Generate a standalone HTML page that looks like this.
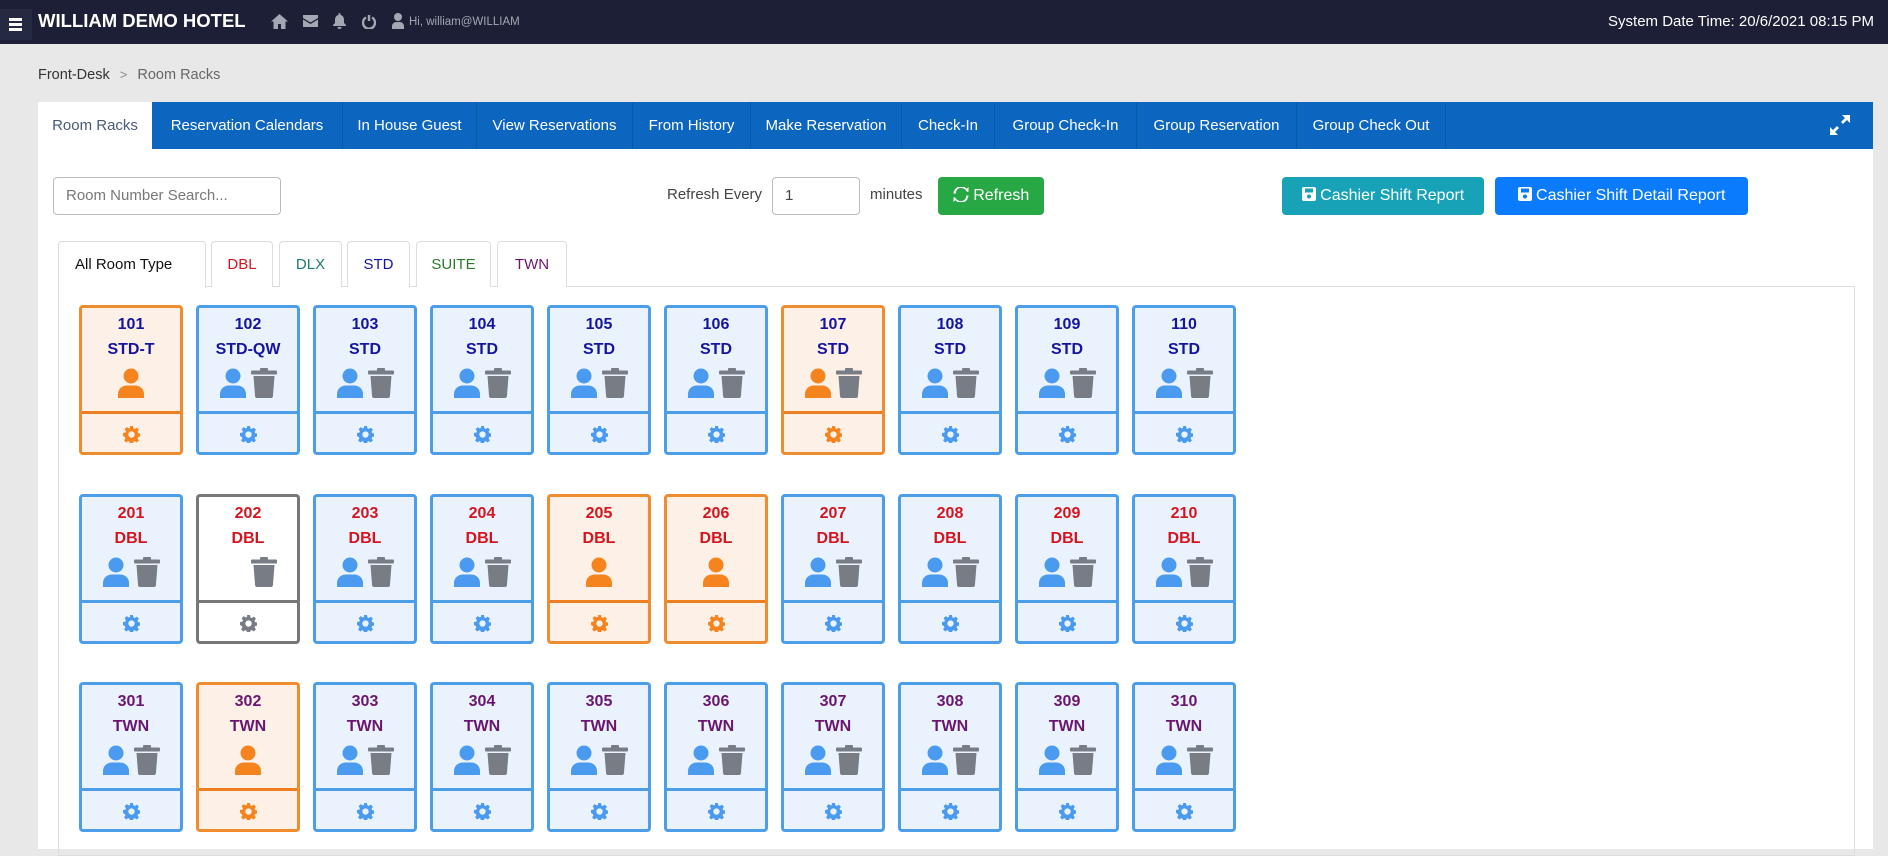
<!DOCTYPE html>
<html><head><meta charset="utf-8">
<style>
*{box-sizing:border-box;margin:0;padding:0}
body{width:1888px;height:848px;overflow:hidden;background:#e8e8e8;font-family:"Liberation Sans",sans-serif;position:relative}
.abs{position:absolute}
.hdr{left:0;top:0;width:1888px;height:44px;background:#1c1f35}
.ham{left:0;top:9px;width:32px;height:31px;background:#252a42}
.title{left:38px;top:10px;color:#fff;font-weight:bold;font-size:18.5px}
.sys{right:14px;top:13px;color:#fff;font-size:15px}
.bc{left:38px;top:67px;font-size:14.5px;color:#333}
.tabbar{left:38px;top:102px;width:1835px;height:47px;background:#0c65bf}
.tab{position:absolute;top:0;height:47px;line-height:47px;color:#fff;font-size:15px;text-align:center;border-right:1px solid #0a58a8}
.panel{left:38px;top:149px;width:1835px;height:700px;background:#fff}
.inp{border:1px solid #bbb;border-radius:4px;background:#fff;font-size:15px;color:#777;padding-left:12px;line-height:36px}
.btn{border-radius:4px;color:#fff;font-size:16px;text-align:center;line-height:37px}
.rt{position:absolute;top:241px;height:46px;line-height:46px;font-size:15px;text-align:center;background:#fff;border:1px solid #ddd;border-bottom:none;border-radius:4px 4px 0 0}
.box{left:58px;top:286px;width:1797px;height:570px;border:1px solid #ddd}
.card{position:absolute;width:104px;height:150px;border:3px solid #4d9ee8;border-radius:4px;background:#eaf3fd;text-align:center;font-weight:bold;font-size:16px}
.card .n{position:absolute;left:0;right:0;top:8px}
.card .t{position:absolute;left:0;right:0;top:33px}
.card .ic{position:absolute;left:0;right:0;top:60px;height:30px}
.card .ft{position:absolute;left:0;right:0;top:103px;bottom:0;border-top:3px solid #4d9ee8}
.card .ft svg{position:absolute;left:41px;top:12px}
.o{border-color:#f08c30;background:#fdf0e6}.o .ft{border-color:#ec7f22}
.g{border-color:#777;background:#fff}.g .ft{border-color:#777}
.r1{color:#1414a0}.r2{color:#d4151f}.r3{color:#6a1670}
</style></head><body>
<svg width="0" height="0" style="position:absolute">
<defs>
<symbol id="p" viewBox="0 0 28 30"><circle cx="14" cy="8" r="7.5"/><path d="M1 30v-4c0-5 4-8.5 9-8.5h8c5 0 9 3.5 9 8.5v4z"/></symbol>
<symbol id="tr" viewBox="0 0 26 30"><rect x="9" y="0" width="8" height="3" rx="1"/><rect x="0" y="2.5" width="26" height="4" rx="1"/><path d="M2.5 8h21l-1.6 20.5c-.1 1-1 1.5-2 1.5H6.1c-1 0-1.9-.5-2-1.5z"/></symbol>
<symbol id="gr" viewBox="0 0 16 16"><path d="M6.6 0h2.8l.4 2.2 1.3.6 1.9-1.3 2 2-1.3 1.9.6 1.3 2.2.4v2.8l-2.2.4-.6 1.3 1.3 1.9-2 2-1.9-1.3-1.3.6-.4 2.2H6.6l-.4-2.2-1.3-.6-1.9 1.3-2-2 1.3-1.9-.6-1.3L0 9.4V6.6l2.2-.4.6-1.3L1.5 3l2-2 1.9 1.3 1.3-.6zM8 5a3 3 0 100 6 3 3 0 000-6z" fill-rule="evenodd"/></symbol>
</defs></svg>

<div class="abs hdr"></div>
<div class="abs ham"><div class="abs" style="left:9px;top:9px;width:13px;height:2.5px;background:#fff"></div><div class="abs" style="left:9px;top:14px;width:13px;height:2.5px;background:#fff"></div><div class="abs" style="left:9px;top:19px;width:13px;height:2.5px;background:#fff"></div></div>
<div class="abs title">WILLIAM DEMO HOTEL</div>
<svg class="abs" style="left:271px;top:14px" width="17" height="15" viewBox="0 0 17 15" fill="#a3a7b3"><path d="M8.5 0L0 7.5h2.5V15h4.5v-5h3v5h4.5V7.5H17z"/></svg>
<svg class="abs" style="left:303px;top:15px" width="15" height="12" viewBox="0 0 15 12" fill="#a3a7b3"><path d="M0 0h15v3L7.5 7.5 0 3z"/><path d="M0 4.5l7.5 4.5 7.5-4.5V12H0z"/></svg>
<svg class="abs" style="left:333px;top:13px" width="13" height="16" viewBox="0 0 13 16" fill="#a3a7b3"><path d="M6.5 0c.7 0 1 .5 1 1v1c2.5.5 3.5 2.5 3.5 5v3l2 2v1H0v-1l2-2V7c0-2.5 1-4.5 3.5-5V1c0-.5.3-1 1-1zM4.5 14h4a2 2 0 01-4 0z"/></svg>
<svg class="abs" style="left:362px;top:14px" width="14" height="15" viewBox="0 0 14 15" fill="none" stroke="#a3a7b3" stroke-width="2.4"><path d="M4 3.5a6 6 0 106 0"/><path d="M7 1v6"/></svg>
<svg class="abs" style="left:392px;top:13px" width="12" height="16" viewBox="0 0 12 16" fill="#a3a7b3"><circle cx="6" cy="4" r="4"/><path d="M0 16v-3c0-2 2-4 4-4h4c2 0 4 2 4 4v3z"/></svg>
<div class="abs" style="left:409px;top:16px;color:#a3a7b3;font-size:11.5px">Hi, william@WILLIAM</div>
<div class="abs sys">System Date Time: 20/6/2021 08:15 PM</div>

<div class="abs bc">Front-Desk <span style="color:#888;font-size:13px;margin:0 6px">&gt;</span> <span style="color:#666">Room Racks</span></div>

<div class="abs tabbar">
<div class="tab" style="left:0;width:114px;background:#fff;color:#4a5a78;border:none">Room Racks</div>
<div class="tab" style="left:114px;width:191px">Reservation Calendars</div>
<div class="tab" style="left:305px;width:134px">In House Guest</div>
<div class="tab" style="left:439px;width:156px">View Reservations</div>
<div class="tab" style="left:595px;width:118px">From History</div>
<div class="tab" style="left:713px;width:151px">Make Reservation</div>
<div class="tab" style="left:864px;width:93px">Check-In</div>
<div class="tab" style="left:957px;width:142px">Group Check-In</div>
<div class="tab" style="left:1099px;width:160px">Group Reservation</div>
<div class="tab" style="left:1259px;width:149px">Group Check Out</div>
<svg class="abs" style="left:1791px;top:12px" width="22" height="22" viewBox="0 0 22 22" fill="#fff"><path d="M13 1h8v8l-3-3-4 4-2-2 4-4z"/><path d="M9 21H1v-8l3 3 4-4 2 2-4 4z"/></svg>
</div>

<div class="abs panel"></div>
<div class="abs inp" style="left:53px;top:177px;width:228px;height:38px">Room Number Search...</div>
<div class="abs" style="left:667px;top:186px;font-size:15px;color:#444">Refresh Every</div>
<div class="abs inp" style="left:772px;top:177px;width:88px;height:38px;color:#444">1</div>
<div class="abs" style="left:870px;top:186px;font-size:15px;color:#444">minutes</div>
<div class="abs btn" style="left:938px;top:177px;width:106px;height:38px;background:#28a745"><svg width="16" height="15" viewBox="0 0 16 16" fill="#fff" style="vertical-align:-2px"><path d="M8 1a7 7 0 016.3 4H16V0l-2 2A8 8 0 000 7h2.5A5.5 5.5 0 018 1zM8 15a7 7 0 01-6.3-4H0v5l2-2a8 8 0 0014-5h-2.5A5.5 5.5 0 018 15z"/></svg> Refresh</div>
<div class="abs btn" style="left:1282px;top:177px;width:202px;height:38px;background:#17a2b8"><svg width="14" height="14" viewBox="0 0 14 14" style="vertical-align:-1px"><rect width="14" height="14" rx="2" fill="#fff"/><rect x="3" y="1.5" width="8" height="4" fill="#17a2b8"/><circle cx="7" cy="9.5" r="2" fill="#17a2b8"/></svg> Cashier Shift Report</div>
<div class="abs btn" style="left:1495px;top:177px;width:253px;height:38px;background:#0b7bfd"><svg width="14" height="14" viewBox="0 0 14 14" style="vertical-align:-1px"><rect width="14" height="14" rx="2" fill="#fff"/><rect x="3" y="1.5" width="8" height="4" fill="#0b7bfd"/><circle cx="7" cy="9.5" r="2" fill="#0b7bfd"/></svg> Cashier Shift Detail Report</div>

<div class="abs box"></div>
<div class="rt" style="left:58px;width:148px;color:#111;height:47px;text-align:left;padding-left:16px">All Room Type</div>
<div class="rt" style="left:211px;width:62px;color:#d4151f">DBL</div>
<div class="rt" style="left:279px;width:63px;color:#1d7a6e">DLX</div>
<div class="rt" style="left:347px;width:63px;color:#1414a0">STD</div>
<div class="rt" style="left:416px;width:75px;color:#2a7a2a">SUITE</div>
<div class="rt" style="left:497px;width:70px;color:#6a1670">TWN</div>

<!-- Row 1 -->
<div class="card o r1" style="left:79px;top:305px"><div class="n">101</div><div class="t">STD-T</div><div class="ic"><svg width="28" height="30" fill="#f5841f"><use href="#p"/></svg></div><div class="ft"><svg width="17" height="17" fill="#f5841f"><use href="#gr"/></svg></div></div>
<div class="card r1" style="left:196px;top:305px"><div class="n">102</div><div class="t">STD-QW</div><div class="ic"><svg width="28" height="30" fill="#4a9af0"><use href="#p"/></svg> <svg width="26" height="30" fill="#777c85"><use href="#tr"/></svg></div><div class="ft"><svg width="17" height="17" fill="#4a9af0"><use href="#gr"/></svg></div></div>
<div class="card r1" style="left:313px;top:305px"><div class="n">103</div><div class="t">STD</div><div class="ic"><svg width="28" height="30" fill="#4a9af0"><use href="#p"/></svg> <svg width="26" height="30" fill="#777c85"><use href="#tr"/></svg></div><div class="ft"><svg width="17" height="17" fill="#4a9af0"><use href="#gr"/></svg></div></div>
<div class="card r1" style="left:430px;top:305px"><div class="n">104</div><div class="t">STD</div><div class="ic"><svg width="28" height="30" fill="#4a9af0"><use href="#p"/></svg> <svg width="26" height="30" fill="#777c85"><use href="#tr"/></svg></div><div class="ft"><svg width="17" height="17" fill="#4a9af0"><use href="#gr"/></svg></div></div>
<div class="card r1" style="left:547px;top:305px"><div class="n">105</div><div class="t">STD</div><div class="ic"><svg width="28" height="30" fill="#4a9af0"><use href="#p"/></svg> <svg width="26" height="30" fill="#777c85"><use href="#tr"/></svg></div><div class="ft"><svg width="17" height="17" fill="#4a9af0"><use href="#gr"/></svg></div></div>
<div class="card r1" style="left:664px;top:305px"><div class="n">106</div><div class="t">STD</div><div class="ic"><svg width="28" height="30" fill="#4a9af0"><use href="#p"/></svg> <svg width="26" height="30" fill="#777c85"><use href="#tr"/></svg></div><div class="ft"><svg width="17" height="17" fill="#4a9af0"><use href="#gr"/></svg></div></div>
<div class="card o r1" style="left:781px;top:305px"><div class="n">107</div><div class="t">STD</div><div class="ic"><svg width="28" height="30" fill="#f5841f"><use href="#p"/></svg> <svg width="26" height="30" fill="#777c85"><use href="#tr"/></svg></div><div class="ft"><svg width="17" height="17" fill="#f5841f"><use href="#gr"/></svg></div></div>
<div class="card r1" style="left:898px;top:305px"><div class="n">108</div><div class="t">STD</div><div class="ic"><svg width="28" height="30" fill="#4a9af0"><use href="#p"/></svg> <svg width="26" height="30" fill="#777c85"><use href="#tr"/></svg></div><div class="ft"><svg width="17" height="17" fill="#4a9af0"><use href="#gr"/></svg></div></div>
<div class="card r1" style="left:1015px;top:305px"><div class="n">109</div><div class="t">STD</div><div class="ic"><svg width="28" height="30" fill="#4a9af0"><use href="#p"/></svg> <svg width="26" height="30" fill="#777c85"><use href="#tr"/></svg></div><div class="ft"><svg width="17" height="17" fill="#4a9af0"><use href="#gr"/></svg></div></div>
<div class="card r1" style="left:1132px;top:305px"><div class="n">110</div><div class="t">STD</div><div class="ic"><svg width="28" height="30" fill="#4a9af0"><use href="#p"/></svg> <svg width="26" height="30" fill="#777c85"><use href="#tr"/></svg></div><div class="ft"><svg width="17" height="17" fill="#4a9af0"><use href="#gr"/></svg></div></div>

<!-- Row 2 -->
<div class="card r2" style="left:79px;top:494px"><div class="n">201</div><div class="t">DBL</div><div class="ic"><svg width="28" height="30" fill="#4a9af0"><use href="#p"/></svg> <svg width="26" height="30" fill="#777c85"><use href="#tr"/></svg></div><div class="ft"><svg width="17" height="17" fill="#4a9af0"><use href="#gr"/></svg></div></div>
<div class="card g r2" style="left:196px;top:494px"><div class="n">202</div><div class="t">DBL</div><div class="ic"><svg width="28" height="30" fill="none"></svg> <svg width="26" height="30" fill="#777c85"><use href="#tr"/></svg></div><div class="ft"><svg width="17" height="17" fill="#777c85"><use href="#gr"/></svg></div></div>
<div class="card r2" style="left:313px;top:494px"><div class="n">203</div><div class="t">DBL</div><div class="ic"><svg width="28" height="30" fill="#4a9af0"><use href="#p"/></svg> <svg width="26" height="30" fill="#777c85"><use href="#tr"/></svg></div><div class="ft"><svg width="17" height="17" fill="#4a9af0"><use href="#gr"/></svg></div></div>
<div class="card r2" style="left:430px;top:494px"><div class="n">204</div><div class="t">DBL</div><div class="ic"><svg width="28" height="30" fill="#4a9af0"><use href="#p"/></svg> <svg width="26" height="30" fill="#777c85"><use href="#tr"/></svg></div><div class="ft"><svg width="17" height="17" fill="#4a9af0"><use href="#gr"/></svg></div></div>
<div class="card o r2" style="left:547px;top:494px"><div class="n">205</div><div class="t">DBL</div><div class="ic"><svg width="28" height="30" fill="#f5841f"><use href="#p"/></svg></div><div class="ft"><svg width="17" height="17" fill="#f5841f"><use href="#gr"/></svg></div></div>
<div class="card o r2" style="left:664px;top:494px"><div class="n">206</div><div class="t">DBL</div><div class="ic"><svg width="28" height="30" fill="#f5841f"><use href="#p"/></svg></div><div class="ft"><svg width="17" height="17" fill="#f5841f"><use href="#gr"/></svg></div></div>
<div class="card r2" style="left:781px;top:494px"><div class="n">207</div><div class="t">DBL</div><div class="ic"><svg width="28" height="30" fill="#4a9af0"><use href="#p"/></svg> <svg width="26" height="30" fill="#777c85"><use href="#tr"/></svg></div><div class="ft"><svg width="17" height="17" fill="#4a9af0"><use href="#gr"/></svg></div></div>
<div class="card r2" style="left:898px;top:494px"><div class="n">208</div><div class="t">DBL</div><div class="ic"><svg width="28" height="30" fill="#4a9af0"><use href="#p"/></svg> <svg width="26" height="30" fill="#777c85"><use href="#tr"/></svg></div><div class="ft"><svg width="17" height="17" fill="#4a9af0"><use href="#gr"/></svg></div></div>
<div class="card r2" style="left:1015px;top:494px"><div class="n">209</div><div class="t">DBL</div><div class="ic"><svg width="28" height="30" fill="#4a9af0"><use href="#p"/></svg> <svg width="26" height="30" fill="#777c85"><use href="#tr"/></svg></div><div class="ft"><svg width="17" height="17" fill="#4a9af0"><use href="#gr"/></svg></div></div>
<div class="card r2" style="left:1132px;top:494px"><div class="n">210</div><div class="t">DBL</div><div class="ic"><svg width="28" height="30" fill="#4a9af0"><use href="#p"/></svg> <svg width="26" height="30" fill="#777c85"><use href="#tr"/></svg></div><div class="ft"><svg width="17" height="17" fill="#4a9af0"><use href="#gr"/></svg></div></div>

<!-- Row 3 -->
<div class="card r3" style="left:79px;top:682px"><div class="n">301</div><div class="t">TWN</div><div class="ic"><svg width="28" height="30" fill="#4a9af0"><use href="#p"/></svg> <svg width="26" height="30" fill="#777c85"><use href="#tr"/></svg></div><div class="ft"><svg width="17" height="17" fill="#4a9af0"><use href="#gr"/></svg></div></div>
<div class="card o r3" style="left:196px;top:682px"><div class="n">302</div><div class="t">TWN</div><div class="ic"><svg width="28" height="30" fill="#f5841f"><use href="#p"/></svg></div><div class="ft"><svg width="17" height="17" fill="#f5841f"><use href="#gr"/></svg></div></div>
<div class="card r3" style="left:313px;top:682px"><div class="n">303</div><div class="t">TWN</div><div class="ic"><svg width="28" height="30" fill="#4a9af0"><use href="#p"/></svg> <svg width="26" height="30" fill="#777c85"><use href="#tr"/></svg></div><div class="ft"><svg width="17" height="17" fill="#4a9af0"><use href="#gr"/></svg></div></div>
<div class="card r3" style="left:430px;top:682px"><div class="n">304</div><div class="t">TWN</div><div class="ic"><svg width="28" height="30" fill="#4a9af0"><use href="#p"/></svg> <svg width="26" height="30" fill="#777c85"><use href="#tr"/></svg></div><div class="ft"><svg width="17" height="17" fill="#4a9af0"><use href="#gr"/></svg></div></div>
<div class="card r3" style="left:547px;top:682px"><div class="n">305</div><div class="t">TWN</div><div class="ic"><svg width="28" height="30" fill="#4a9af0"><use href="#p"/></svg> <svg width="26" height="30" fill="#777c85"><use href="#tr"/></svg></div><div class="ft"><svg width="17" height="17" fill="#4a9af0"><use href="#gr"/></svg></div></div>
<div class="card r3" style="left:664px;top:682px"><div class="n">306</div><div class="t">TWN</div><div class="ic"><svg width="28" height="30" fill="#4a9af0"><use href="#p"/></svg> <svg width="26" height="30" fill="#777c85"><use href="#tr"/></svg></div><div class="ft"><svg width="17" height="17" fill="#4a9af0"><use href="#gr"/></svg></div></div>
<div class="card r3" style="left:781px;top:682px"><div class="n">307</div><div class="t">TWN</div><div class="ic"><svg width="28" height="30" fill="#4a9af0"><use href="#p"/></svg> <svg width="26" height="30" fill="#777c85"><use href="#tr"/></svg></div><div class="ft"><svg width="17" height="17" fill="#4a9af0"><use href="#gr"/></svg></div></div>
<div class="card r3" style="left:898px;top:682px"><div class="n">308</div><div class="t">TWN</div><div class="ic"><svg width="28" height="30" fill="#4a9af0"><use href="#p"/></svg> <svg width="26" height="30" fill="#777c85"><use href="#tr"/></svg></div><div class="ft"><svg width="17" height="17" fill="#4a9af0"><use href="#gr"/></svg></div></div>
<div class="card r3" style="left:1015px;top:682px"><div class="n">309</div><div class="t">TWN</div><div class="ic"><svg width="28" height="30" fill="#4a9af0"><use href="#p"/></svg> <svg width="26" height="30" fill="#777c85"><use href="#tr"/></svg></div><div class="ft"><svg width="17" height="17" fill="#4a9af0"><use href="#gr"/></svg></div></div>
<div class="card r3" style="left:1132px;top:682px"><div class="n">310</div><div class="t">TWN</div><div class="ic"><svg width="28" height="30" fill="#4a9af0"><use href="#p"/></svg> <svg width="26" height="30" fill="#777c85"><use href="#tr"/></svg></div><div class="ft"><svg width="17" height="17" fill="#4a9af0"><use href="#gr"/></svg></div></div>
</body></html>
